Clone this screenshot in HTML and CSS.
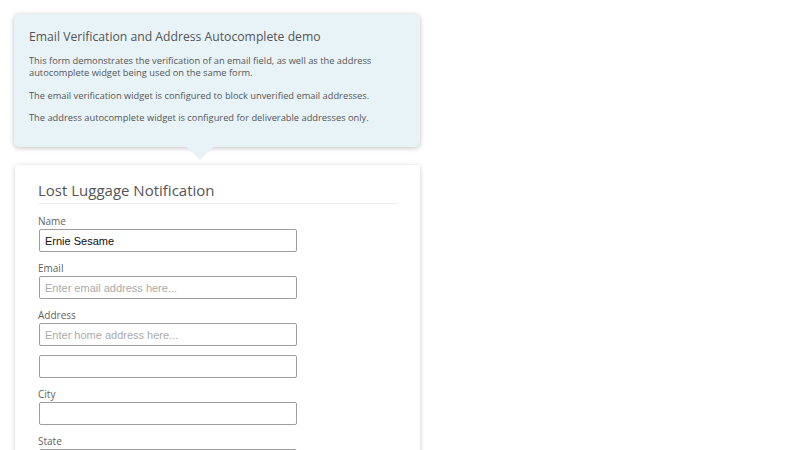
FILE: index.html
```html
<!DOCTYPE html>
<html>
<head>
<meta charset="utf-8">
<link rel="stylesheet" href="styles.css">
</head>
<body>
<div class="wrap">
  <div class="intro">
    <h2 class="intro-title">Email Verification and Address Autocomplete demo</h2>
    <p>This form demonstrates the verification of an email field, as well as the address autocomplete widget being used on the same form.</p>
    <p>The email verification widget is configured to block unverified email addresses.</p>
    <p>The address autocomplete widget is configured for deliverable addresses only.</p>
  </div>
  <form class="card">
    <h1 class="card-title">Lost Luggage Notification</h1>
    <div class="field">
      <label>Name</label>
      <input type="text" value="Ernie Sesame">
    </div>
    <div class="field">
      <label>Email</label>
      <input type="text" placeholder="Enter email address here...">
    </div>
    <div class="field">
      <label>Address</label>
      <input type="text" placeholder="Enter home address here...">
      <input type="text" class="second">
    </div>
    <div class="field">
      <label>City</label>
      <input type="text">
    </div>
    <div class="field">
      <label>State</label>
      <input type="text">
    </div>
  </form>
</div>
</body>
</html>
```
FILE: styles.css
```css
html, body {
  margin: 0;
  padding: 0;
  background: #ffffff;
}
body {
  font-family: "Open Sans", "Liberation Sans", sans-serif;
  color: #555;
}
.wrap {
  padding: 14px;
  width: 406px;
  display: flex;
  flex-direction: column;
}
.intro {
  position: relative;
  background: #e8f3f8;
  border-radius: 5px;
  box-shadow: 0 1px 5px rgba(0,0,0,0.25);
  padding: 14px 15px 23px 15px;
}
.intro::after {
  content: "";
  position: absolute;
  left: 50%;
  bottom: -13px;
  margin-left: -30px;
  border-left: 13px solid transparent;
  border-right: 13px solid transparent;
  border-top: 13px solid #e8f3f8;
}
.intro-title {
  margin: 0 0 9px;
  font-size: 12.2px;
  font-weight: 400;
  line-height: 18px;
  color: #555;
}
.intro p {
  margin: 0 0 10.5px;
  font-size: 9.3px;
  line-height: 12px;
  color: #555;
}
.intro p:last-child {
  margin-bottom: 0;
}
.card {
  margin-top: 18px;
  margin-left: 1px;
  background: #fff;
  box-shadow: 0 1px 5px rgba(0,0,0,0.2);
  border-radius: 3px;
  padding: 14px 23px 20px 23px;
}
.card-title {
  margin: 0 0 10px;
  font-size: 15px;
  font-weight: 400;
  line-height: 22px;
  color: #555;
  padding-bottom: 2px;
  border-bottom: 1px solid #eee;
}
.field {
  display: flex;
  flex-direction: column;
  align-items: flex-start;
  margin-bottom: 9px;
}
.field label {
  font-size: 10px;
  line-height: 14px;
  margin-bottom: 1px;
  color: #5f5f5f;
}
.field input {
  box-sizing: border-box;
  width: 258px;
  height: 23px;
  margin: 0 0 0 1px;
  border: 1px solid #9e9e9e;
  border-radius: 2px;
  padding: 0 5px;
  font-family: "Liberation Sans", Arial, sans-serif;
  font-size: 11px;
  color: #111;
  background: #fff;
}
.field input::placeholder {
  color: #aaa;
}
.field input.second {
  margin-top: 9px;
}
```
